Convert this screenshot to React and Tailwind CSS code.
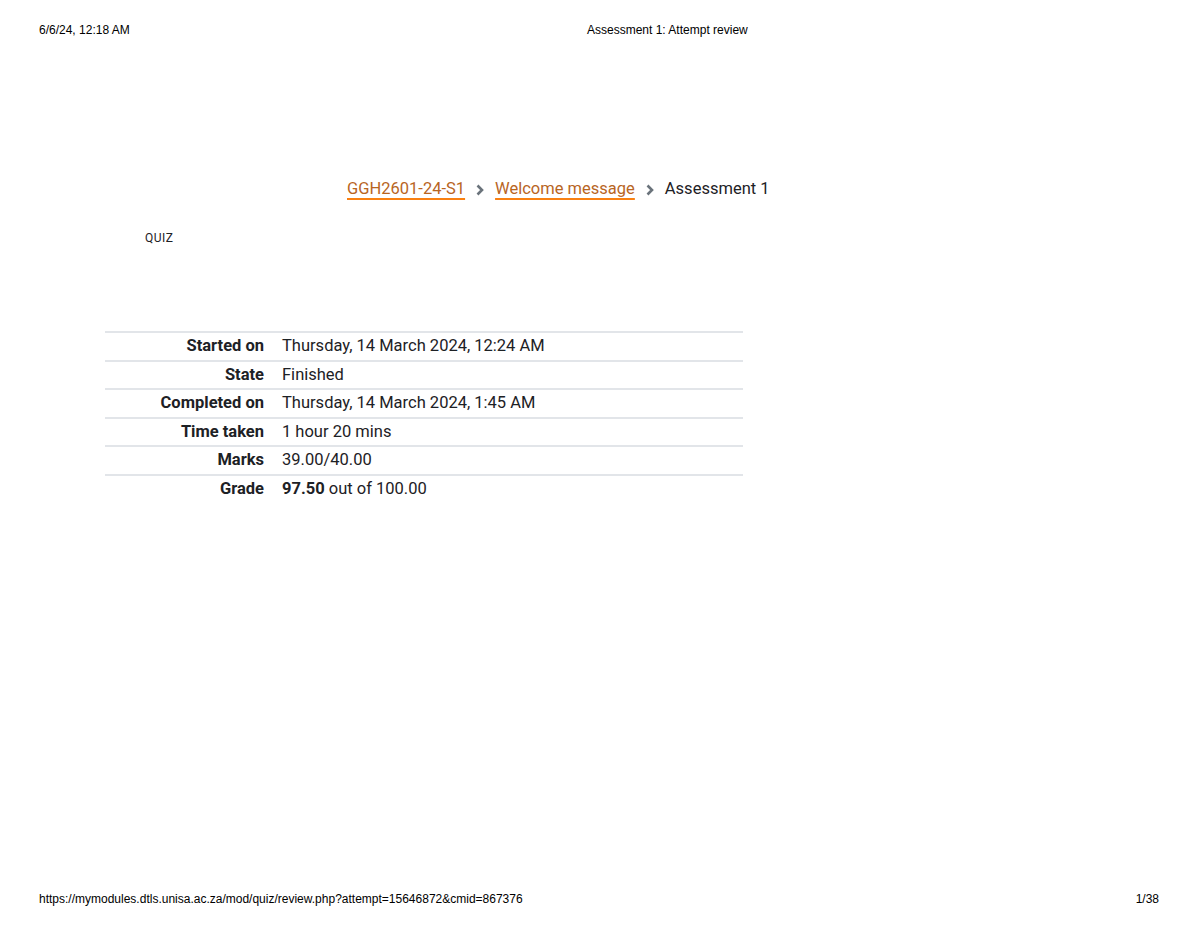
import React from "react";

const rows = [
  ["Started on", "Thursday, 14 March 2024, 12:24 AM"],
  ["State", "Finished"],
  ["Completed on", "Thursday, 14 March 2024, 1:45 AM"],
  ["Time taken", "1 hour 20 mins"],
  ["Marks", "39.00/40.00"],
  ["Grade", null],
];

function Chevron() {
  return (
    <svg width="10" height="12" viewBox="0 0 10 12" className="mx-[10px] mt-[2px]">
      <path d="M2.5 1.5 L7 6 L2.5 10.5" fill="none" stroke="#6a737b" strokeWidth="2.6" />
    </svg>
  );
}

export default function App() {
  return (
    <div className="w-[1200px] h-[927px] bg-white flex flex-col relative" style={{ fontFamily: "Roboto, sans-serif" }}>
      <div
        className="flex items-center h-[14px] mt-[23px] text-[12px] text-[#000]"
        style={{ fontFamily: "'Liberation Sans', Arial, sans-serif" }}
      >
        <span className="ml-[39px] w-[548px]">6/6/24, 12:18 AM</span>
        <span>Assessment 1: Attempt review</span>
      </div>

      <div className="flex items-center ml-[347px] mt-[140px] h-[24px] text-[16.5px] text-[#1d2125]">
        <a className="text-[#b8651f] underline decoration-[#f98012] underline-offset-[4px] decoration-[1.5px]">GGH2601-24-S1</a>
        <Chevron />
        <a className="text-[#b8651f] underline decoration-[#f98012] underline-offset-[4px] decoration-[1.5px]">Welcome message</a>
        <Chevron />
        <span>Assessment 1</span>
      </div>

      <div className="ml-[145px] mt-[29px] text-[12px] text-[#1d2125] tracking-[0.5px] leading-[16px]">QUIZ</div>

      <div className="ml-[105px] w-[638px] mt-[85px] flex flex-col text-[16.5px] text-[#1d2125]">
        {rows.map(([label, value]) => (
          <div key={label} className="flex items-center h-[28.6px] border-t-2 border-[#e2e5e9]">
            <div className="w-[159px] text-right font-bold">{label}</div>
            <div className="ml-[18px]">
              {value !== null ? value : (
                <>
                  <b>97.50</b> out of 100.00
                </>
              )}
            </div>
          </div>
        ))}
      </div>

      <div
        className="absolute left-0 right-0 top-[890px] flex items-center text-[12px] text-[#000]"
        style={{ fontFamily: "'Liberation Sans', Arial, sans-serif" }}
      >
        <span className="ml-[39px]">https://mymodules.dtls.unisa.ac.za/mod/quiz/review.php?attempt=15646872&amp;cmid=867376</span>
        <span className="ml-auto mr-[41px]">1/38</span>
      </div>
    </div>
  );
}
